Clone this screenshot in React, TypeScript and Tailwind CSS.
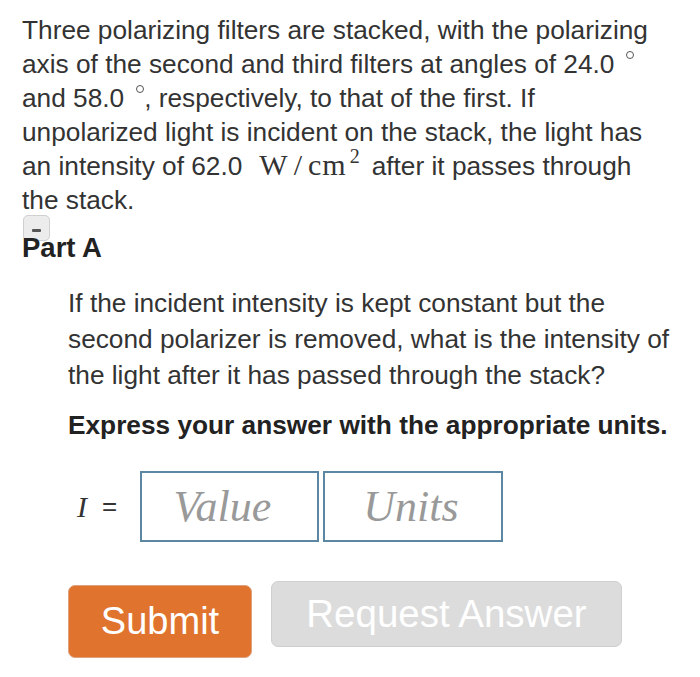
import React from "react";

const sans = { fontFamily: '"Liberation Sans", Arial, Helvetica, sans-serif' };
const serif = { fontFamily: '"Liberation Serif", "Times New Roman", serif' };

function Deg() {
  return (
    <span className="relative inline-block w-[8px] h-[8px] ml-[12px] rounded-full border border-[#555] bottom-[14px]" />
  );
}

export default function App() {
  return (
    <div className="w-[700px] h-[677px] bg-white text-[#333] overflow-hidden" style={sans}>
      <div className="pl-[22px] pr-[10px] pt-[13px]">
        <p className="text-[26.25px] leading-[34px] whitespace-nowrap">
          Three polarizing filters are stacked, with the polarizing
          <br />
          axis of the second and third filters at angles of 24.0
          <Deg />
          <br />
          and 58.0
          <Deg />, respectively, to that of the first. If
          <br />
          unpolarized light is incident on the stack, the light has
          <br />
          an intensity of 62.0
          <span className="ml-[17px] mr-[12px] text-[30px] leading-none" style={serif}>
            W<span className="mx-[6px]">/</span><span className="tracking-[1px]">cm</span>
            <span className="relative -top-[12px] ml-[3px] text-[20px] leading-none">2</span>
          </span>
          after it passes through
          <br />
          the stack.
        </p>
        <div className="relative mt-[14px]">
          <div className="absolute left-[1px] -top-[16px] w-[27px] h-[26px] rounded-[5px] border border-[#d0d0d0] bg-[#ececec] flex items-center justify-center">
            <div className="w-[9px] h-[3px] mt-[4px] bg-[#555] rounded-[1px]" />
          </div>
          <h2 className="relative text-[27.5px] font-bold leading-[34px] text-[#222]">Part A</h2>
        </div>
      </div>
      <div className="pl-[68px] pr-[10px] pt-[20px]">
        <p className="text-[26.25px] leading-[36px] whitespace-nowrap">
          If the incident intensity is kept constant but the
          <br />
          second polarizer is removed, what is the intensity of
          <br />
          the light after it has passed through the stack?
        </p>
        <p className="mt-[14px] text-[26.25px] leading-[36px] font-bold text-[#222] whitespace-nowrap">
          Express your answer with the appropriate units.
        </p>
        <div className="mt-[28px] flex items-center">
          <div className="w-[72px] flex items-center text-[30px] text-[#333]" style={serif}>
            <span className="italic ml-[9px]">I</span>
            <span className="ml-[15px] text-[26px]" style={sans}>=</span>
          </div>
          <div className="w-[179px] h-[71px] border-2 border-[#5b87a3] flex items-center justify-center">
            <span className="italic text-[44px] text-[#999] -ml-[14px]" style={serif}>Value</span>
          </div>
          <div className="ml-[4px] w-[180px] h-[71px] border-2 border-[#5b87a3] flex items-center justify-center">
            <span className="italic text-[44px] text-[#999] -ml-[4px]" style={serif}>Units</span>
          </div>
        </div>
        <div className="mt-[39px] flex items-start">
          <button className="mt-[4px] w-[184px] h-[73px] rounded-[7px] bg-[#e0742e] border border-[#dfa07c] text-white text-[38px]" style={sans}>
            Submit
          </button>
          <button className="ml-[19px] w-[351px] h-[66px] rounded-[7px] bg-[#dcdcdc] border border-[#cfcfcf] text-white text-[38.5px]" style={sans}>
            Request Answer
          </button>
        </div>
      </div>
    </div>
  );
}
